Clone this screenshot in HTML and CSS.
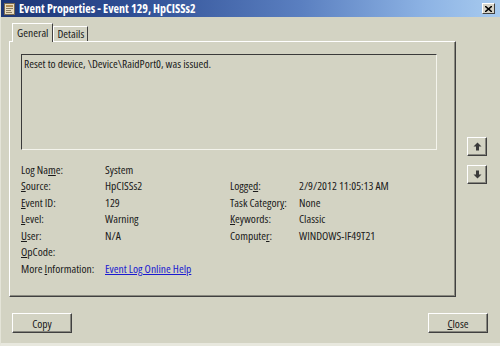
FILE: index.html
```html
<!DOCTYPE html>
<html>
<head>
<meta charset="utf-8">
<link rel="stylesheet" href="styles.css">
</head>
<body>
<div class="window">
  <div class="titlebar">
    <svg class="app-icon" width="11" height="12" viewBox="0 0 11 12">
      <rect x="0.5" y="0.5" width="10" height="11" fill="#e8dcc0" stroke="#7a6a50"/>
      <rect x="2" y="2" width="7" height="2" fill="#b08a50"/>
      <rect x="2" y="5" width="7" height="1" fill="#8a7a60"/>
      <rect x="2" y="7" width="5" height="1" fill="#8a7a60"/>
      <rect x="2" y="9" width="6" height="1" fill="#8a7a60"/>
    </svg>
    <span class="title">Event Properties - Event 129, HpCISSs2</span>
    <span class="close-btn">
      <svg width="7" height="6" viewBox="0 0 7 6"><path d="M0 0 L7 6 M7 0 L0 6" stroke="#000" stroke-width="1.5"/></svg>
    </span>
  </div>
  <div class="main">
    <div class="tabs-area">
      <div class="tabs">
        <div class="tab active">General</div>
        <div class="tab">Details</div>
      </div>
      <div class="panel">
        <div class="message">Reset to device, \Device\RaidPort0, was issued.</div>
        <div class="fields">
          <span class="label">Log Na<u>m</u>e:</span><span class="value">System</span><span></span><span></span>
          <span class="label"><u>S</u>ource:</span><span class="value">HpCISSs2</span><span class="label">Logge<u>d</u>:</span><span class="value">2/9/2012 11:05:13 AM</span>
          <span class="label"><u>E</u>vent ID:</span><span class="value">129</span><span class="label">Task Categor<u>y</u>:</span><span class="value">None</span>
          <span class="label"><u>L</u>evel:</span><span class="value">Warning</span><span class="label"><u>K</u>eywords:</span><span class="value">Classic</span>
          <span class="label"><u>U</u>ser:</span><span class="value">N/A</span><span class="label">Compute<u>r</u>:</span><span class="value">WINDOWS-IF49T21</span>
          <span class="label"><u>O</u>pCode:</span><span class="value"></span><span></span><span></span>
          <span class="label">More <u>I</u>nformation:</span><a class="link" href="#">Event Log Online Help</a><span></span><span></span>
        </div>
      </div>
    </div>
    <div class="side">
      <span class="arrow-btn">
        <svg width="9" height="9" viewBox="0 0 9 9"><path d="M4.5 0.5 L8.5 4.5 L6 4.5 L6 8.5 L3 8.5 L3 4.5 L0.5 4.5 Z" fill="#3a3a3a"/></svg>
      </span>
      <span class="arrow-btn">
        <svg width="9" height="9" viewBox="0 0 9 9"><path d="M4.5 8.5 L8.5 4.5 L6 4.5 L6 0.5 L3 0.5 L3 4.5 L0.5 4.5 Z" fill="#3a3a3a"/></svg>
      </span>
    </div>
  </div>
  <div class="footer">
    <span class="btn">Copy</span>
    <span class="btn"><u>C</u>lose</span>
  </div>
</div>
</body>
</html>
```

FILE: styles.css
```css
html, body {
  margin: 0;
  padding: 0;
}
body {
  width: 500px;
  height: 346px;
  overflow: hidden;
  font-family: "Open Sans", "Liberation Sans", sans-serif;
  font-size: 11.5px;
  font-stretch: 85%;
  color: #1a1a1a;
}
.window {
  width: 500px;
  height: 346px;
  box-sizing: border-box;
  background: #d3d3c3;
  border-left: 1px solid #e4e4d8;
  border-bottom: 3px solid #e8e8de;
  display: flex;
  flex-direction: column;
}
.titlebar {
  height: 17px;
  flex: none;
  display: flex;
  align-items: center;
  padding: 0 5px 0 3px;
  background: linear-gradient(to right, #1d3676 0%, #2e4d93 25%, #5a7fc0 60%, #8db3e4 85%, #a8cbef 100%);
}
.app-icon {
  flex: none;
  margin-right: 4px;
}
.title {
  color: #fff;
  font-weight: bold;
  font-size: 12px;
  line-height: 17px;
  flex: 1;
  white-space: nowrap;
}
.close-btn {
  width: 13px;
  height: 11px;
  box-sizing: border-box;
  background: #d6d3c8;
  border: 1px solid;
  border-color: #fff #404040 #404040 #fff;
  display: flex;
  align-items: center;
  justify-content: center;
}
.main {
  display: flex;
  padding: 6px 0 0 8px;
  height: 280px;
  flex: none;
}
.tabs-area {
  width: 447px;
  display: flex;
  flex-direction: column;
}
.tabs {
  display: flex;
  align-items: flex-end;
  height: 18px;
  padding-left: 3px;
}
.tab {
  height: 15px;
  box-sizing: border-box;
  padding: 0 3px;
  border: 1px solid;
  border-color: #fff #404040 transparent #fff;
  border-bottom: none;
  line-height: 14px;
}
.tab.active {
  height: 19px;
  padding: 2px 4px 0;
  margin-bottom: -1px;
  background: #d3d3c3;
  position: relative;
  z-index: 1;
}
.panel {
  border: 1px solid;
  border-color: #fff #404040 #404040 #fff;
  box-shadow: inset -1px -1px 0 #8a8a80;
  padding: 12px 18px 0 11px;
  box-sizing: border-box;
  height: 256px;
}
.message {
  height: 96px;
  box-sizing: border-box;
  border: 1px solid;
  border-color: #3a3a3a #f4f4ec #f4f4ec #3a3a3a;
  padding: 1px 2px;
}
.fields {
  display: grid;
  grid-template-columns: 84px 125px 69px auto;
  grid-auto-rows: 16.5px;
  align-items: center;
  margin-top: 11px;
}
.label, .value {
  white-space: nowrap;
}
.link {
  color: #1a1ad0;
  text-decoration: underline;
  white-space: nowrap;
}
.side {
  display: flex;
  flex-direction: column;
  gap: 9px;
  padding: 114px 0 0 11px;
}
.arrow-btn {
  width: 20px;
  height: 19px;
  box-sizing: border-box;
  border: 1px solid;
  border-color: #fff #404040 #404040 #fff;
  box-shadow: inset -1px -1px 0 #888880;
  display: flex;
  align-items: center;
  justify-content: center;
}
.footer {
  display: flex;
  justify-content: space-between;
  padding: 10px 12px 0 11px;
}
.btn {
  width: 60px;
  height: 20px;
  box-sizing: border-box;
  border: 1px solid;
  border-color: #fff #404040 #404040 #fff;
  box-shadow: inset -1px -1px 0 #888880;
  display: flex;
  align-items: center;
  justify-content: center;
}
```
